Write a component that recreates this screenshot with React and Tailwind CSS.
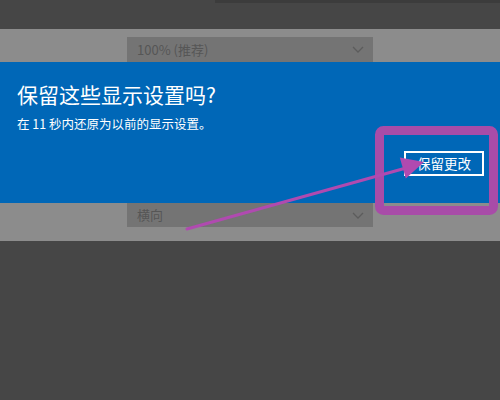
import React from 'react';

const font = { fontFamily: '"Microsoft YaHei", "Noto Sans CJK SC", "Noto Sans", sans-serif' };

const Chevron = () => (
    <svg width="12" height="7" viewBox="0 0 12 7" className="mr-[9px]">
        <path d="M1 1 L6 6 L11 1" fill="none" stroke="#5c5c5c" strokeWidth="1.3" />
    </svg>
);

const Dropdown = ({ label }) => (
    <div className="ml-[127px] w-[246px] h-full bg-[#747474] flex items-center justify-between pl-[10px]">
        <span className="text-[13px] text-[#565656]">{label}</span>
        <Chevron />
    </div>
);

export default function App() {
    return (
        <div className="relative w-[500px] h-[400px] bg-[#464646] overflow-hidden" style={font}>
            {/* window top edge */}
            <div className="h-[29px] flex justify-end">
                <div className="w-[285px] h-[3px] bg-[#3c3c3c]" />
            </div>

            {/* settings behind the dialog */}
            <div className="h-[33px] bg-[#8c8c8c] pt-[8px]">
                <Dropdown label="100% (推荐)" />
            </div>

            {/* keep changes dialog */}
            <div className="h-[141px] bg-[#0067b7] px-[17px] pt-[17px] text-white">
                <h2 className="text-[21px] leading-[30px] font-normal">保留这些显示设置吗?</h2>
                <p className="text-[12.5px] leading-[18px] mt-[6px]">在 11 秒内还原为以前的显示设置。</p>
                <div className="flex justify-end mt-[18px]">
                    <button className="w-[80px] h-[25px] border-2 border-white text-[13.5px] leading-none text-white -mr-[1px]">
                        保留更改
                    </button>
                </div>
            </div>

            <div className="h-[38px] bg-[#8c8c8c]">
                <div className="h-[24px]">
                    <Dropdown label="横向" />
                </div>
            </div>

            {/* annotation */}
            <svg className="absolute inset-0 pointer-events-none" width="500" height="400">
                <rect x="379.5" y="130.5" width="114" height="80" rx="4" fill="none" stroke="#a84ca8" strokeWidth="9" />
                <line x1="187" y1="229" x2="406" y2="168" stroke="#b04ab0" strokeWidth="3" strokeLinecap="round" />
                <polygon points="424,162 399.8,157.4 405.8,178.6" fill="#b04ab0" />
            </svg>
        </div>
    );
}
